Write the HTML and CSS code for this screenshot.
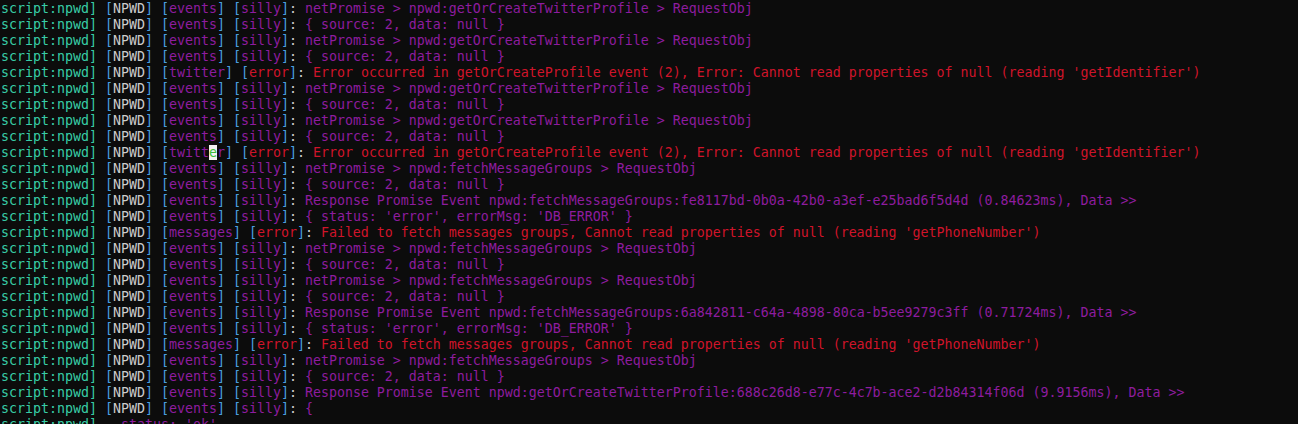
FILE: index.html
```html
<!DOCTYPE html>
<html>
<head>
<meta charset="utf-8">
<link rel="stylesheet" href="styles.css">
</head>
<body>
<div class="term">
<div class="ln"><span class="ns">script:npwd]</span> <span class="b">[</span>NPWD<span class="b">]</span> <span class="b">[</span><span class="m">events</span><span class="b">]</span> <span class="b">[</span><span class="m">silly</span><span class="b">]</span>: <span class="m">netPromise &gt; npwd:getOrCreateTwitterProfile &gt; RequestObj</span></div>
<div class="ln"><span class="ns">script:npwd]</span> <span class="b">[</span>NPWD<span class="b">]</span> <span class="b">[</span><span class="m">events</span><span class="b">]</span> <span class="b">[</span><span class="m">silly</span><span class="b">]</span>: <span class="m">{ source: 2, data: null }</span></div>
<div class="ln"><span class="ns">script:npwd]</span> <span class="b">[</span>NPWD<span class="b">]</span> <span class="b">[</span><span class="m">events</span><span class="b">]</span> <span class="b">[</span><span class="m">silly</span><span class="b">]</span>: <span class="m">netPromise &gt; npwd:getOrCreateTwitterProfile &gt; RequestObj</span></div>
<div class="ln"><span class="ns">script:npwd]</span> <span class="b">[</span>NPWD<span class="b">]</span> <span class="b">[</span><span class="m">events</span><span class="b">]</span> <span class="b">[</span><span class="m">silly</span><span class="b">]</span>: <span class="m">{ source: 2, data: null }</span></div>
<div class="ln"><span class="ns">script:npwd]</span> <span class="b">[</span>NPWD<span class="b">]</span> <span class="b">[</span><span class="m">twitter</span><span class="b">]</span> <span class="b">[</span><span class="r">error</span><span class="b">]</span>: <span class="r">Error occurred in getOrCreateProfile event (2), Error: Cannot read properties of null (reading 'getIdentifier')</span></div>
<div class="ln"><span class="ns">script:npwd]</span> <span class="b">[</span>NPWD<span class="b">]</span> <span class="b">[</span><span class="m">events</span><span class="b">]</span> <span class="b">[</span><span class="m">silly</span><span class="b">]</span>: <span class="m">netPromise &gt; npwd:getOrCreateTwitterProfile &gt; RequestObj</span></div>
<div class="ln"><span class="ns">script:npwd]</span> <span class="b">[</span>NPWD<span class="b">]</span> <span class="b">[</span><span class="m">events</span><span class="b">]</span> <span class="b">[</span><span class="m">silly</span><span class="b">]</span>: <span class="m">{ source: 2, data: null }</span></div>
<div class="ln"><span class="ns">script:npwd]</span> <span class="b">[</span>NPWD<span class="b">]</span> <span class="b">[</span><span class="m">events</span><span class="b">]</span> <span class="b">[</span><span class="m">silly</span><span class="b">]</span>: <span class="m">netPromise &gt; npwd:getOrCreateTwitterProfile &gt; RequestObj</span></div>
<div class="ln"><span class="ns">script:npwd]</span> <span class="b">[</span>NPWD<span class="b">]</span> <span class="b">[</span><span class="m">events</span><span class="b">]</span> <span class="b">[</span><span class="m">silly</span><span class="b">]</span>: <span class="m">{ source: 2, data: null }</span></div>
<div class="ln"><span class="ns">script:npwd]</span> <span class="b">[</span>NPWD<span class="b">]</span> <span class="b">[</span><span class="m">twitt<span class="cur">e</span>r</span><span class="b">]</span> <span class="b">[</span><span class="r">error</span><span class="b">]</span>: <span class="r">Error occurred in getOrCreateProfile event (2), Error: Cannot read properties of null (reading 'getIdentifier')</span></div>
<div class="ln"><span class="ns">script:npwd]</span> <span class="b">[</span>NPWD<span class="b">]</span> <span class="b">[</span><span class="m">events</span><span class="b">]</span> <span class="b">[</span><span class="m">silly</span><span class="b">]</span>: <span class="m">netPromise &gt; npwd:fetchMessageGroups &gt; RequestObj</span></div>
<div class="ln"><span class="ns">script:npwd]</span> <span class="b">[</span>NPWD<span class="b">]</span> <span class="b">[</span><span class="m">events</span><span class="b">]</span> <span class="b">[</span><span class="m">silly</span><span class="b">]</span>: <span class="m">{ source: 2, data: null }</span></div>
<div class="ln"><span class="ns">script:npwd]</span> <span class="b">[</span>NPWD<span class="b">]</span> <span class="b">[</span><span class="m">events</span><span class="b">]</span> <span class="b">[</span><span class="m">silly</span><span class="b">]</span>: <span class="m">Response Promise Event npwd:fetchMessageGroups:fe8117bd-0b0a-42b0-a3ef-e25bad6f5d4d (0.84623ms), Data &gt;&gt;</span></div>
<div class="ln"><span class="ns">script:npwd]</span> <span class="b">[</span>NPWD<span class="b">]</span> <span class="b">[</span><span class="m">events</span><span class="b">]</span> <span class="b">[</span><span class="m">silly</span><span class="b">]</span>: <span class="m">{ status: 'error', errorMsg: 'DB_ERROR' }</span></div>
<div class="ln"><span class="ns">script:npwd]</span> <span class="b">[</span>NPWD<span class="b">]</span> <span class="b">[</span><span class="m">messages</span><span class="b">]</span> <span class="b">[</span><span class="r">error</span><span class="b">]</span>: <span class="r">Failed to fetch messages groups, Cannot read properties of null (reading 'getPhoneNumber')</span></div>
<div class="ln"><span class="ns">script:npwd]</span> <span class="b">[</span>NPWD<span class="b">]</span> <span class="b">[</span><span class="m">events</span><span class="b">]</span> <span class="b">[</span><span class="m">silly</span><span class="b">]</span>: <span class="m">netPromise &gt; npwd:fetchMessageGroups &gt; RequestObj</span></div>
<div class="ln"><span class="ns">script:npwd]</span> <span class="b">[</span>NPWD<span class="b">]</span> <span class="b">[</span><span class="m">events</span><span class="b">]</span> <span class="b">[</span><span class="m">silly</span><span class="b">]</span>: <span class="m">{ source: 2, data: null }</span></div>
<div class="ln"><span class="ns">script:npwd]</span> <span class="b">[</span>NPWD<span class="b">]</span> <span class="b">[</span><span class="m">events</span><span class="b">]</span> <span class="b">[</span><span class="m">silly</span><span class="b">]</span>: <span class="m">netPromise &gt; npwd:fetchMessageGroups &gt; RequestObj</span></div>
<div class="ln"><span class="ns">script:npwd]</span> <span class="b">[</span>NPWD<span class="b">]</span> <span class="b">[</span><span class="m">events</span><span class="b">]</span> <span class="b">[</span><span class="m">silly</span><span class="b">]</span>: <span class="m">{ source: 2, data: null }</span></div>
<div class="ln"><span class="ns">script:npwd]</span> <span class="b">[</span>NPWD<span class="b">]</span> <span class="b">[</span><span class="m">events</span><span class="b">]</span> <span class="b">[</span><span class="m">silly</span><span class="b">]</span>: <span class="m">Response Promise Event npwd:fetchMessageGroups:6a842811-c64a-4898-80ca-b5ee9279c3ff (0.71724ms), Data &gt;&gt;</span></div>
<div class="ln"><span class="ns">script:npwd]</span> <span class="b">[</span>NPWD<span class="b">]</span> <span class="b">[</span><span class="m">events</span><span class="b">]</span> <span class="b">[</span><span class="m">silly</span><span class="b">]</span>: <span class="m">{ status: 'error', errorMsg: 'DB_ERROR' }</span></div>
<div class="ln"><span class="ns">script:npwd]</span> <span class="b">[</span>NPWD<span class="b">]</span> <span class="b">[</span><span class="m">messages</span><span class="b">]</span> <span class="b">[</span><span class="r">error</span><span class="b">]</span>: <span class="r">Failed to fetch messages groups, Cannot read properties of null (reading 'getPhoneNumber')</span></div>
<div class="ln"><span class="ns">script:npwd]</span> <span class="b">[</span>NPWD<span class="b">]</span> <span class="b">[</span><span class="m">events</span><span class="b">]</span> <span class="b">[</span><span class="m">silly</span><span class="b">]</span>: <span class="m">netPromise &gt; npwd:fetchMessageGroups &gt; RequestObj</span></div>
<div class="ln"><span class="ns">script:npwd]</span> <span class="b">[</span>NPWD<span class="b">]</span> <span class="b">[</span><span class="m">events</span><span class="b">]</span> <span class="b">[</span><span class="m">silly</span><span class="b">]</span>: <span class="m">{ source: 2, data: null }</span></div>
<div class="ln"><span class="ns">script:npwd]</span> <span class="b">[</span>NPWD<span class="b">]</span> <span class="b">[</span><span class="m">events</span><span class="b">]</span> <span class="b">[</span><span class="m">silly</span><span class="b">]</span>: <span class="m">Response Promise Event npwd:getOrCreateTwitterProfile:688c26d8-e77c-4c7b-ace2-d2b84314f06d (9.9156ms), Data &gt;&gt;</span></div>
<div class="ln"><span class="ns">script:npwd]</span> <span class="b">[</span>NPWD<span class="b">]</span> <span class="b">[</span><span class="m">events</span><span class="b">]</span> <span class="b">[</span><span class="m">silly</span><span class="b">]</span>: <span class="m">{</span></div>
<div class="ln"><span class="ns">script:npwd]</span>   <span class="m">status: 'ok',</span></div>
</div>
</body>
</html>
```

FILE: styles.css
```css
html, body {
  margin: 0;
  padding: 0;
  background: #0c0c0c;
  overflow: hidden;
  height: 100%;
}

.term {
  padding: 1px 0 0 1px;
  font-family: "DejaVu Sans Mono", "Liberation Mono", monospace;
  font-size: 13.29px;
  line-height: 16px;
  color: #cccccc;
}

.ln {
  height: 16px;
  white-space: pre;
}

.ns { color: #38cca6; }
.b { color: #4a9fe0; }
.m { color: #8e1c9f; }
.r { color: #d0142a; }

.cur {
  background: #f2f2f2;
  color: #3cbf3c;
}
```
